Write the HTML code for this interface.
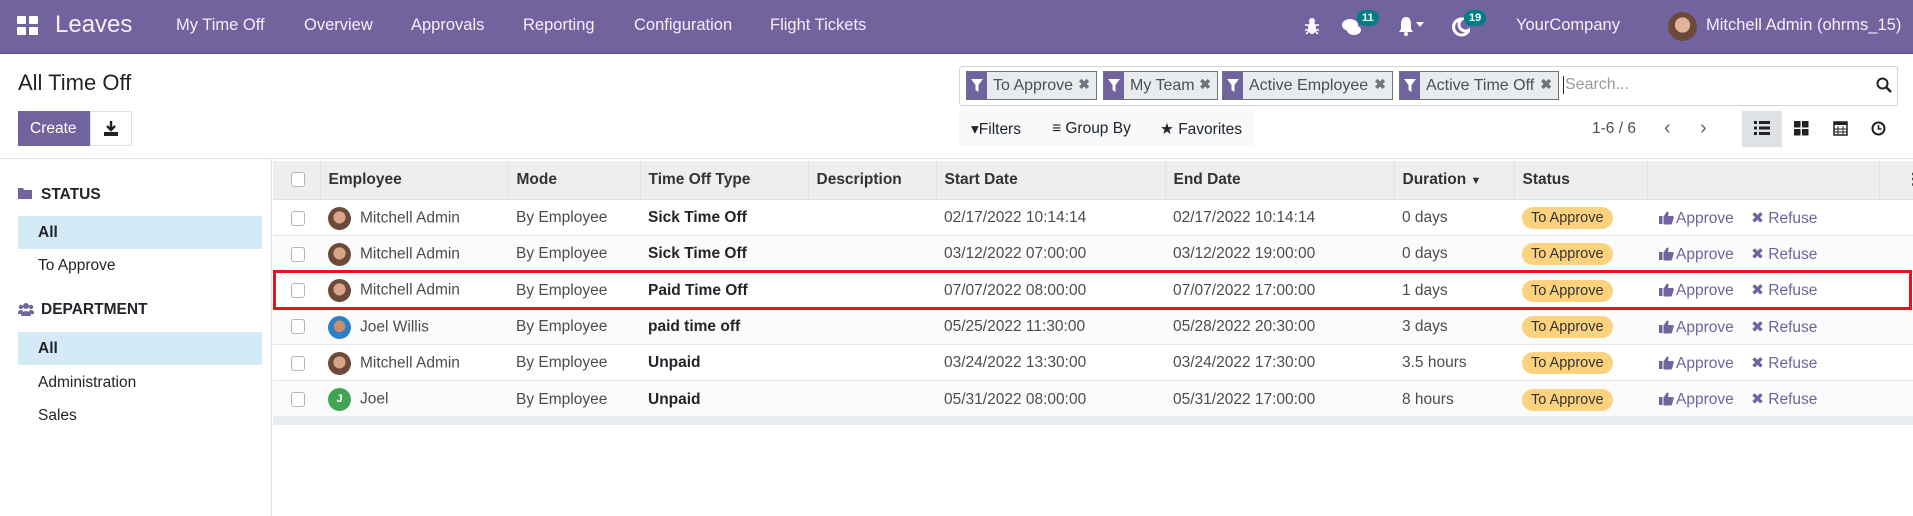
<!DOCTYPE html>
<html><head><meta charset="utf-8"><style>
*{box-sizing:border-box;margin:0;padding:0}
body{width:1913px;height:516px;overflow:hidden;background:#fff;font-family:"Liberation Sans",Arial,sans-serif;color:#4c4c4c;font-size:15.5px;position:relative}
.nav{position:absolute;left:0;top:0;width:1913px;height:54px;background:#71639e;color:#fff;border-bottom:1px solid #5d5183}
.nav span{position:absolute;top:16px;font-size:16.5px;color:#f2f0f7}
.abs{position:absolute}
.badge{position:absolute;background:#017e84;color:#fff;font-size:11px;font-weight:bold;border-radius:9px;padding:2px 5px;line-height:12px}
.facet{position:absolute;top:71px;height:29px;background:#e9ecef;border:1px solid #6c757d;font-size:16px;color:#495057}
.facet .ic{position:absolute;left:0;top:0;width:20px;height:27px;background:#71639e}
.facet .t{position:absolute;left:26px;top:5px}
.facet .x{position:absolute;right:6px;top:4px;font-size:14px;font-weight:bold;color:#6c757d}
table{position:absolute;left:273px;top:161px;border-collapse:collapse;table-layout:fixed;width:1640px}
th{height:38px;background:#eeeeee;text-align:left;font-weight:bold;color:#333;padding-left:8px;border-left:1px solid #e3e3e3;font-size:15.5px;border-bottom:1px solid #dee2e6}
td{height:36.3px;padding-left:8px;border-bottom:1px solid #e6e6e6;white-space:nowrap;color:#4c4c4c;padding-top:2px}
tr.r{background:#fff}
tr.r:nth-child(odd){background:#fbfbfb}
td b{color:#212529}
.cb{display:inline-block;width:14px;height:15px;border:1px solid #adb5bd;border-radius:3px;background:#fff;vertical-align:middle}
.av{display:inline-block;width:23px;height:23px;border-radius:50%;background:radial-gradient(circle at 50% 45%,#d9a58a 0 35%,#6b4a3a 36% 100%);vertical-align:middle;margin-right:9px}
.st{display:inline-block;background:#fcd27e;color:#333;border-radius:11px;padding:3px 9px;font-size:14.5px}
.act{color:#71639e}
.tu{display:inline-block;width:15px;height:15px;vertical-align:-2px;margin-right:2px}
.side{position:absolute;left:0;top:159px;width:272px;height:357px;border-right:1px solid #dee2e6}
</style></head><body>
<div class="nav">
 <svg class="abs" style="left:17px;top:16px" width="22" height="20" viewBox="0 0 22 20"><rect x="0" y="0" width="9" height="8" rx="1" fill="#fff"/><rect x="12" y="0" width="9" height="8" rx="1" fill="#fff"/><rect x="0" y="11" width="9" height="8" rx="1" fill="#fff"/><rect x="12" y="11" width="9" height="8" rx="1" fill="#fff"/></svg>
 <span style="left:55px;top:11px;font-size:24px">Leaves</span>
 <span style="left:176px">My Time Off</span><span style="left:304px">Overview</span><span style="left:411px">Approvals</span><span style="left:523px">Reporting</span><span style="left:634px">Configuration</span><span style="left:770px">Flight Tickets</span>
 <svg class="abs" style="left:1305px;top:17px" width="14" height="18" viewBox="0 0 14 18"><ellipse cx="7" cy="11" rx="4" ry="6" fill="#fff"/><circle cx="7" cy="4" r="3" fill="#fff"/><path d="M0 8h14M0 13h14M1 17l3-3M13 17l-3-3" stroke="#fff" stroke-width="1.5"/></svg>
 <svg class="abs" style="left:1341px;top:17px" width="22" height="20" viewBox="0 0 22 20"><ellipse cx="9" cy="8" rx="8" ry="6" fill="#fff"/><ellipse cx="13" cy="13" rx="7" ry="5" fill="#fff"/></svg>
 <div class="badge" style="left:1357px;top:10px">11</div>
 <svg class="abs" style="left:1398px;top:16px" width="16" height="20" viewBox="0 0 16 20"><path d="M8 1C4 1 3 5 3 8v5l-2 3h14l-2-3V8c0-3-1-7-5-7z" fill="#fff"/><circle cx="8" cy="18" r="2" fill="#fff"/></svg>
 <div class="abs" style="left:1416px;top:22px;border:4px solid transparent;border-top:5px solid #fff"></div>
 <svg class="abs" style="left:1452px;top:17px" width="18" height="20" viewBox="0 0 18 20"><path d="M10 2a8 8 0 1 0 7 11a6 6 0 0 1-7-11z" fill="none" stroke="#fff" stroke-width="3"/></svg>
 <div class="badge" style="left:1464px;top:10px">19</div>
 <span style="left:1516px">YourCompany</span>
 <div class="abs" style="left:1668px;top:12px;width:29px;height:29px;border-radius:50%;background:radial-gradient(circle at 50% 45%,#e1b49a 0 35%,#6b4a3a 36% 100%)"></div>
 <span style="left:1706px">Mitchell Admin (ohrms_15)</span>
</div>
<div class="abs" style="left:18px;top:70px;font-size:22px;color:#212529">All Time Off</div>
<div class="abs" style="left:18px;top:111px;width:72px;height:35px;background:#71639e;color:#fff;font-size:15.5px;padding:9px 0 0 12px">Create</div>
<div class="abs" style="left:90px;top:111px;width:42px;height:35px;border:1px solid #dee2e6"><svg style="position:absolute;left:13px;top:9px" width="14" height="15" viewBox="0 0 14 15"><path d="M7 0v9M3 5l4 4 4-4" stroke="#222" stroke-width="2.4" fill="none"/><rect x="0" y="11" width="14" height="4" fill="#222"/></svg></div>
<div class="abs" style="left:959px;top:66px;width:939px;height:40px;border:1px solid #ced4da;border-radius:3px"></div>
<div class="facet" style="left:966px;width:131px"><div class="ic"></div><div class="t">To Approve</div><div class="x">✖</div></div>
<div class="facet" style="left:1103px;width:115px"><div class="ic"></div><div class="t">My Team</div><div class="x">✖</div></div>
<div class="facet" style="left:1222px;width:171px"><div class="ic"></div><div class="t">Active Employee</div><div class="x">✖</div></div>
<div class="facet" style="left:1399px;width:160px"><div class="ic"></div><div class="t">Active Time Off</div><div class="x">✖</div></div>
<svg class="abs" style="left:969px;top:78px" width="16" height="16"><path d="M2 1h12l-4.5 6v7l-3-2V7z" fill="#fff"/></svg>
<svg class="abs" style="left:1106px;top:78px" width="16" height="16"><path d="M2 1h12l-4.5 6v7l-3-2V7z" fill="#fff"/></svg>
<svg class="abs" style="left:1225px;top:78px" width="16" height="16"><path d="M2 1h12l-4.5 6v7l-3-2V7z" fill="#fff"/></svg>
<svg class="abs" style="left:1402px;top:78px" width="16" height="16"><path d="M2 1h12l-4.5 6v7l-3-2V7z" fill="#fff"/></svg>
<div class="abs" style="left:1563px;top:76px;font-size:16px;color:#999;border-left:1px solid #222;padding-left:1px">Search...</div>
<svg class="abs" style="left:1876px;top:77px" width="16" height="16"><circle cx="6.5" cy="6.5" r="5" stroke="#222" stroke-width="2" fill="none"/><path d="M10 10l5 5" stroke="#222" stroke-width="2.4"/></svg>
<div class="abs" style="left:959px;top:111px;width:295px;height:35px;background:#f8f9fa"></div>
<div class="abs" style="left:971px;top:120px;font-size:15.5px;color:#212529">▾Filters</div>
<div class="abs" style="left:1052px;top:120px;font-size:15.5px;color:#212529">≡ Group By</div>
<div class="abs" style="left:1160px;top:120px;font-size:15.5px;color:#212529">★ Favorites</div>
<div class="abs" style="left:1592px;top:120px;font-size:15.5px;color:#4c4c4c">1-6 / 6</div>
<div class="abs" style="left:1664px;top:117px;font-size:20px;color:#666">‹</div>
<div class="abs" style="left:1700px;top:117px;font-size:20px;color:#666">›</div>
<div class="abs" style="left:1742px;top:111px;width:40px;height:36px;background:#dee2e6"></div>
<svg class="abs" style="left:1754px;top:121px" width="16" height="14"><g fill="#222"><rect x="0" y="0" width="3" height="3"/><rect x="5" y="0" width="11" height="3"/><rect x="0" y="5.5" width="3" height="3"/><rect x="5" y="5.5" width="11" height="3"/><rect x="0" y="11" width="3" height="3"/><rect x="5" y="11" width="11" height="3"/></g></svg>
<svg class="abs" style="left:1794px;top:121px" width="15" height="15"><g fill="#222"><rect x="0" y="0" width="6.5" height="6.5"/><rect x="8" y="0" width="6.5" height="6.5"/><rect x="0" y="8" width="6.5" height="6.5"/><rect x="8" y="8" width="6.5" height="6.5"/></g></svg>
<svg class="abs" style="left:1833px;top:120px" width="15" height="16"><rect x="1" y="2" width="13" height="13" fill="none" stroke="#222" stroke-width="1.5"/><rect x="1" y="2" width="13" height="3" fill="#222"/><path d="M5 6v9M10 6v9M1 9h13M1 12h13" stroke="#222" stroke-width="1"/></svg>
<svg class="abs" style="left:1871px;top:121px" width="15" height="15"><circle cx="7.5" cy="7.5" r="6" fill="none" stroke="#222" stroke-width="2"/><path d="M7.5 4v4h3" stroke="#222" stroke-width="1.6" fill="none"/></svg>
<div class="abs" style="left:0;top:158px;width:1913px;height:1px;background:#dee2e6"></div>
<div class="side">
 <svg class="abs" style="left:18px;top:28px" width="14" height="12"><path d="M0 1h5l1 2h8v9H0z" fill="#71639e"/></svg>
 <div class="abs" style="left:41px;top:27px;font-weight:bold;font-size:15.5px;color:#212529">STATUS</div>
 <div class="abs" style="left:18px;top:57px;width:244px;height:33px;background:#d4eaf7"></div>
 <div class="abs" style="left:38px;top:65px;font-weight:bold;color:#212529">All</div>
 <div class="abs" style="left:38px;top:98px;color:#212529">To Approve</div>
 <svg class="abs" style="left:18px;top:143px" width="16" height="14"><g fill="#71639e"><circle cx="8" cy="4" r="3"/><circle cx="3" cy="5" r="2.2"/><circle cx="13" cy="5" r="2.2"/><path d="M3 14a5 5 0 0 1 10 0z"/><path d="M0 12a3 3 0 0 1 5-3v3zM16 12a3 3 0 0 0-5-3v3z"/></g></svg>
 <div class="abs" style="left:41px;top:142px;font-weight:bold;font-size:15.5px;color:#212529">DEPARTMENT</div>
 <div class="abs" style="left:18px;top:173px;width:244px;height:33px;background:#d4eaf7"></div>
 <div class="abs" style="left:38px;top:181px;font-weight:bold;color:#212529">All</div>
 <div class="abs" style="left:38px;top:215px;color:#212529">Administration</div>
 <div class="abs" style="left:38px;top:248px;color:#212529">Sales</div>
</div>
<svg width="0" height="0" style="position:absolute"><defs><symbol id="tu" viewBox="0 0 15 15"><rect x="0" y="6" width="3.5" height="8" fill="#71639e"/><path d="M4.5 6.5L8 1.5c1.2 0 1.8.8 1.5 2L9 6h4.5c1 0 1.5 1 1.2 1.8L13 13.5c-.2.6-.7 1-1.3 1H4.5z" fill="#71639e"/></symbol></defs></svg>
<table>
<colgroup><col style="width:47px"><col style="width:188px"><col style="width:132px"><col style="width:168px"><col style="width:128px"><col style="width:229px"><col style="width:229px"><col style="width:120px"><col style="width:133px"><col style="width:232px"><col style="width:34px"></colgroup>
<tr><th style="border-left:none;padding-left:18px"><span class="cb"></span></th><th>Employee</th><th>Mode</th><th>Time Off Type</th><th>Description</th><th>Start Date</th><th>End Date</th><th>Duration <span style="font-size:11px">▼</span></th><th>Status</th><th></th><th style="padding-left:26px">⋮</th></tr>
<tr class="r"><td style="padding-left:18px"><span class="cb"></span></td><td><span class="av"></span>Mitchell Admin</td><td>By Employee</td><td><b>Sick Time Off</b></td><td></td><td>02/17/2022 10:14:14</td><td>02/17/2022 10:14:14</td><td>0 days</td><td><span class="st">To Approve</span></td><td class="act" style="padding-left:12px"><svg class="tu"><use href="#tu"/></svg>Approve &nbsp;&nbsp; ✖ Refuse</td><td></td></tr>
<tr class="r"><td style="padding-left:18px"><span class="cb"></span></td><td><span class="av"></span>Mitchell Admin</td><td>By Employee</td><td><b>Sick Time Off</b></td><td></td><td>03/12/2022 07:00:00</td><td>03/12/2022 19:00:00</td><td>0 days</td><td><span class="st">To Approve</span></td><td class="act" style="padding-left:12px"><svg class="tu"><use href="#tu"/></svg>Approve &nbsp;&nbsp; ✖ Refuse</td><td></td></tr>
<tr class="r"><td style="padding-left:18px"><span class="cb"></span></td><td><span class="av"></span>Mitchell Admin</td><td>By Employee</td><td><b>Paid Time Off</b></td><td></td><td>07/07/2022 08:00:00</td><td>07/07/2022 17:00:00</td><td>1 days</td><td><span class="st">To Approve</span></td><td class="act" style="padding-left:12px"><svg class="tu"><use href="#tu"/></svg>Approve &nbsp;&nbsp; ✖ Refuse</td><td></td></tr>
<tr class="r"><td style="padding-left:18px"><span class="cb"></span></td><td><span class="av" style="background:radial-gradient(circle at 50% 45%,#c98f6a 0 33%,#2f7fc7 34% 100%)"></span>Joel Willis</td><td>By Employee</td><td><b>paid time off</b></td><td></td><td>05/25/2022 11:30:00</td><td>05/28/2022 20:30:00</td><td>3 days</td><td><span class="st">To Approve</span></td><td class="act" style="padding-left:12px"><svg class="tu"><use href="#tu"/></svg>Approve &nbsp;&nbsp; ✖ Refuse</td><td></td></tr>
<tr class="r"><td style="padding-left:18px"><span class="cb"></span></td><td><span class="av"></span>Mitchell Admin</td><td>By Employee</td><td><b>Unpaid</b></td><td></td><td>03/24/2022 13:30:00</td><td>03/24/2022 17:30:00</td><td>3.5 hours</td><td><span class="st">To Approve</span></td><td class="act" style="padding-left:12px"><svg class="tu"><use href="#tu"/></svg>Approve &nbsp;&nbsp; ✖ Refuse</td><td></td></tr>
<tr class="r"><td style="padding-left:18px"><span class="cb"></span></td><td><span class="av" style="background:#3fa552;color:#fff;font-size:11px;font-weight:bold;text-align:center;line-height:23px">J</span>Joel</td><td>By Employee</td><td><b>Unpaid</b></td><td></td><td>05/31/2022 08:00:00</td><td>05/31/2022 17:00:00</td><td>8 hours</td><td><span class="st">To Approve</span></td><td class="act" style="padding-left:12px"><svg class="tu"><use href="#tu"/></svg>Approve &nbsp;&nbsp; ✖ Refuse</td><td></td></tr>
</table>
<div class="abs" style="left:273px;top:416px;width:1640px;height:9px;background:#e9ecef"></div>
<div class="abs" style="left:273px;top:270px;width:1639px;height:40px;border:3px solid #e8141d"></div>
</body></html>
